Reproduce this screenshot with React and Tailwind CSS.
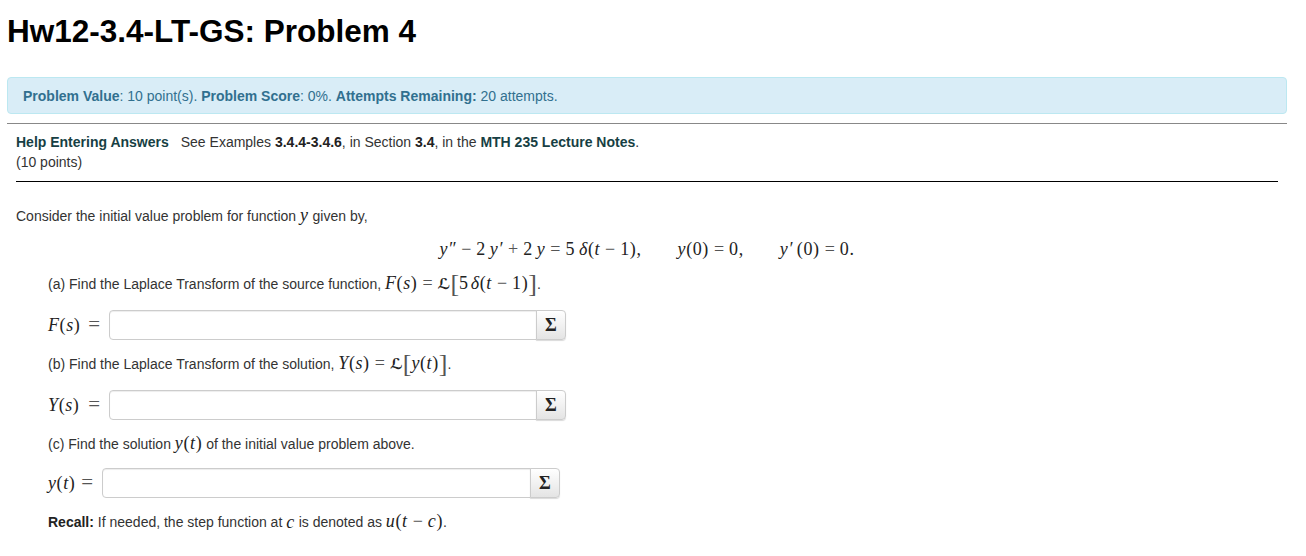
const SERIF = "font-['Liberation_Serif',serif]"

function V({ children }) {
  return <span className={`${SERIF} italic text-[18px] leading-none tracking-[0.6px] text-[#222]`}>{children}</span>
}

function N({ children }) {
  return <span className={`${SERIF} text-[18px] leading-none tracking-[0.6px] text-[#222]`}>{children}</span>
}

// binary operators and relations sit with wide gaps and print lighter
function Op({ children }) {
  return <span className={`${SERIF} mx-[5px] text-[18px] leading-none text-[#555]`}>{children}</span>
}

function Cal() {
  return <span className="font-['DejaVu_Sans',sans-serif] text-[15px] font-bold leading-none text-[#222]">ℒ</span>
}

function Bracket({ children }) {
  return (
    <span className={`${SERIF} text-[#222]`}>
      <span className="text-[26px] font-light leading-none align-[-3px] text-[#555]">[</span>
      {children}
      <span className="text-[26px] font-light leading-none align-[-3px] text-[#555]">]</span>
    </span>
  )
}

function AnswerRow({ label, labelWidth, groupWidth }) {
  return (
    <div className="flex h-[30px] items-center">
      <span className={`flex items-baseline justify-between whitespace-nowrap ${labelWidth}`}>
        <span>{label}</span>
        <span className={`${SERIF} text-[21px] leading-none text-[#555]`}>=</span>
      </span>
      <div className={`flex h-[30px] ml-[9px] ${groupWidth}`}>
        <input
          className="h-full min-w-0 flex-1 rounded-l-[4px] border border-[#ccc] bg-white shadow-[inset_0_1px_1px_rgba(0,0,0,0.075)]"
          aria-label="answer"
        />
        <button className="-ml-px flex h-full w-[30px] items-center justify-center rounded-r-[4px] border border-[#ccc] bg-gradient-to-b from-white to-[#e4e4e4] shadow-[0_1px_1px_rgba(0,0,0,0.15)] font-['Liberation_Serif',serif] text-[18px] font-bold text-[#222]">
          Σ
        </button>
      </div>
    </div>
  )
}

export default function App() {
  return (
    <div className="h-[556px] overflow-hidden bg-white font-['Liberation_Sans',sans-serif] text-[14px] leading-[20px] text-[#333] px-[7px] pr-[19px]">
      <h1 className="pt-[12px] text-[31.5px] font-bold leading-[38px] text-black">Hw12-3.4-LT-GS: Problem 4</h1>

      <div className="mt-[27px] flex h-[37px] items-center rounded-[4px] border border-[#bce8f1] bg-[#d9edf7] px-[15px] text-[#31708f]">
        <p>
          <b>Problem Value</b>: 10 point(s). <b>Problem Score</b>: 0%. <b>Attempts Remaining:</b> 20 attempts.
        </p>
      </div>

      <div className="mt-[9px] border-t border-[#888] px-[9px] pt-[8px] text-[#333]">
        <p>
          <b className="text-[#173f44]">Help Entering Answers</b>
          <span className="ml-[12px]">See Examples </span>
          <b className="text-[#222]">3.4.4-3.4.6</b>, in Section <b className="text-[#222]">3.4</b>, in the{' '}
          <b className="text-[#173f44]">MTH 235 Lecture Notes</b>.
        </p>
        <p>(10 points)</p>
      </div>

      <div className="mx-[9px] mt-[9px] border-t border-black" />

      <div className="px-[9px] pt-[24px]">
        <p>
          Consider the initial value problem for function <V>y</V> given by,
        </p>

        <div className="mt-[12px] flex h-[24px] items-center justify-center gap-[36px] whitespace-nowrap">
          <span>
            <V>y″</V>
            <Op>−</Op>
            <N>2</N> <V>y′</V>
            <Op>+</Op>
            <N>2</N> <V>y</V>
            <Op>=</Op>
            <N>5</N> <V>δ</V>
            <N>(</N>
            <V>t</V>
            <Op>−</Op>
            <N>1),</N>
          </span>
          <span>
            <V>y</V>
            <N>(0)</N>
            <Op>=</Op>
            <N>0,</N>
          </span>
          <span>
            <V>y′</V> <N>(0)</N>
            <Op>=</Op>
            <N>0.</N>
          </span>
        </div>

        <div className="pl-[32px]">
          <p className="mt-[10px] flex h-[24px] items-center whitespace-pre">
            <span>(a) Find the Laplace Transform of the source function, </span>
            <span>
              <V>F</V>
              <N>(</N>
              <V>s</V>
              <N>)</N>
              <Op>=</Op>
              <Cal />
              <Bracket>
                <N>5</N>
                <span className="ml-[2px]" />
                <V>δ</V>
                <N>(</N>
                <V>t</V>
                <Op>−</Op>
                <N>1)</N>
              </Bracket>
            </span>
            <span>.</span>
          </p>

          <div className="mt-[14px]">
            <AnswerRow
              labelWidth="w-[52px]"
              groupWidth="w-[457px]"
              label={
                <>
                  <V>F</V>
                  <N>(</N>
                  <V>s</V>
                  <N>)</N>
                </>
              }
            />
          </div>

          <p className="mt-[12px] flex h-[24px] items-center whitespace-pre">
            <span>(b) Find the Laplace Transform of the solution, </span>
            <span>
              <V>Y</V>
              <N>(</N>
              <V>s</V>
              <N>)</N>
              <Op>=</Op>
              <Cal />
              <Bracket>
                <V>y</V>
                <N>(</N>
                <V>t</V>
                <N>)</N>
              </Bracket>
            </span>
            <span>.</span>
          </p>

          <div className="mt-[14px]">
            <AnswerRow
              labelWidth="w-[52px]"
              groupWidth="w-[457px]"
              label={
                <>
                  <V>Y</V>
                  <N>(</N>
                  <V>s</V>
                  <N>)</N>
                </>
              }
            />
          </div>

          <p className="mt-[12px] flex h-[24px] items-center whitespace-pre">
            <span>(c) Find the solution </span>
            <span>
              <V>y</V>
              <N>(</N>
              <V>t</V>
              <N>)</N>
            </span>
            <span> of the initial value problem above.</span>
          </p>

          <div className="mt-[12px]">
            <AnswerRow
              labelWidth="w-[45px]"
              groupWidth="w-[458px]"
              label={
                <>
                  <V>y</V>
                  <N>(</N>
                  <V>t</V>
                  <N>)</N>
                </>
              }
            />
          </div>

          <p className="mt-[12px] flex h-[24px] items-center whitespace-pre">
            <b className="text-[#222]">Recall:</b>
            <span> If needed, the step function at </span>
            <V>c</V>
            <span> is denoted as </span>
            <span>
              <V>u</V>
              <N>(</N>
              <V>t</V>
              <Op>−</Op>
              <V>c</V>
              <N>)</N>
            </span>
            <span>.</span>
          </p>
        </div>
      </div>
    </div>
  )
}
